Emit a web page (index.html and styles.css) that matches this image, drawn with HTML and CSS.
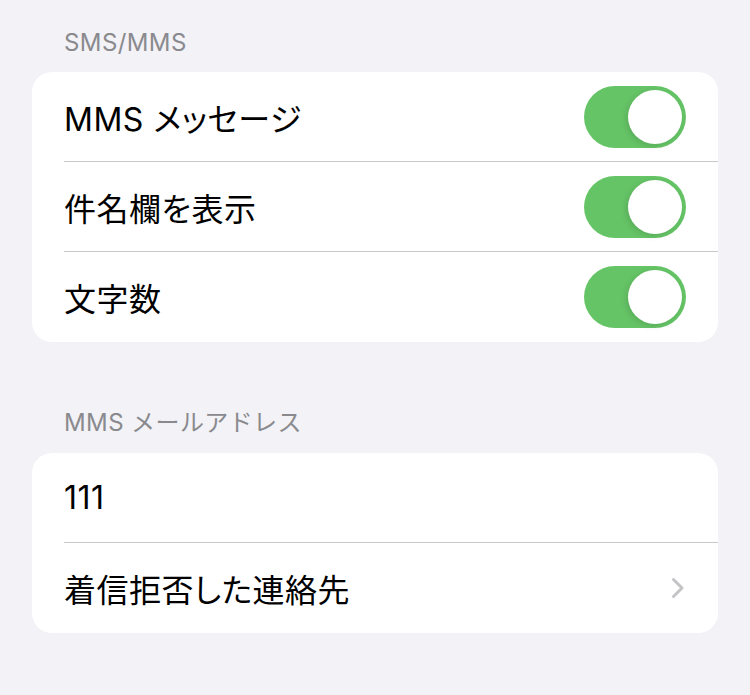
FILE: index.html
```html
<!DOCTYPE html>
<html lang="ja">
<head>
    <meta charset="UTF-8">
    <meta name="viewport" content="width=device-width, initial-scale=1.0">
    <title>SMS/MMS</title>
    <link rel="stylesheet" href="styles.css">
</head>
<body>

    <div class="pagina">

        <div class="titulo">SMS/MMS</div>
        <div class="tarjeta">
            <div class="fila">
                <span class="texto">MMS メッセージ</span>
                <span class="interruptor"><span class="perilla"></span></span>
            </div>
            <div class="fila">
                <span class="texto">件名欄を表示</span>
                <span class="interruptor"><span class="perilla"></span></span>
            </div>
            <div class="fila">
                <span class="texto">文字数</span>
                <span class="interruptor"><span class="perilla"></span></span>
            </div>
        </div>

        <div class="titulo segundo">MMS メールアドレス</div>
        <div class="tarjeta">
            <div class="fila">
                <span class="texto">111</span>
            </div>
            <div class="fila">
                <span class="texto">着信拒否した連絡先</span>
                <svg class="flecha" width="14" height="22" viewBox="0 0 14 22">
                    <polyline points="2.5,2.5 11,11 2.5,19.5" fill="none" stroke="#c4c4c7" stroke-width="3" stroke-linecap="round" stroke-linejoin="round"/>
                </svg>
            </div>
        </div>

    </div>

</body>
</html>
```

FILE: styles.css
```css
*{
    box-sizing: border-box;
    margin: 0;
    padding: 0;
}
body{
    background-color: #f2f2f7;
    font-family: Inter, "Noto Sans CJK JP", sans-serif;
}
.pagina{
    padding: 29px 32px 0 32px;
}
.titulo{
    padding-left: 32px;
    font-size: 24px;
    line-height: 28px;
    letter-spacing: 0.4px;
    color: #8a8a8e;
    margin-bottom: 15px;
}
.segundo{
    margin-top: 67px;
    margin-bottom: 16px;
}
.tarjeta{
    background-color: #fff;
    border-radius: 20px;
    overflow: hidden;
}
.fila{
    height: 90px;
    margin-left: 32px;
    padding-right: 32px;
    display: flex;
    align-items: center;
    justify-content: space-between;
    border-bottom: 1px solid #c8c8ca;
}
.fila:last-child{
    border-bottom: none;
}
.texto{
    font-size: 32px;
    color: #000;
    letter-spacing: 0.5px;
    font-feature-settings: "palt";
}
.interruptor{
    width: 102px;
    height: 62px;
    border-radius: 31px;
    background-color: #65c466;
    position: relative;
}
.perilla{
    position: absolute;
    top: 4px;
    right: 4px;
    width: 54px;
    height: 54px;
    border-radius: 50%;
    background-color: #fff;
    box-shadow: -2px 2px 6px rgba(0, 0, 0, 0.12);
}
.flecha{
    display: block;
    margin-right: 1px;
}
```
